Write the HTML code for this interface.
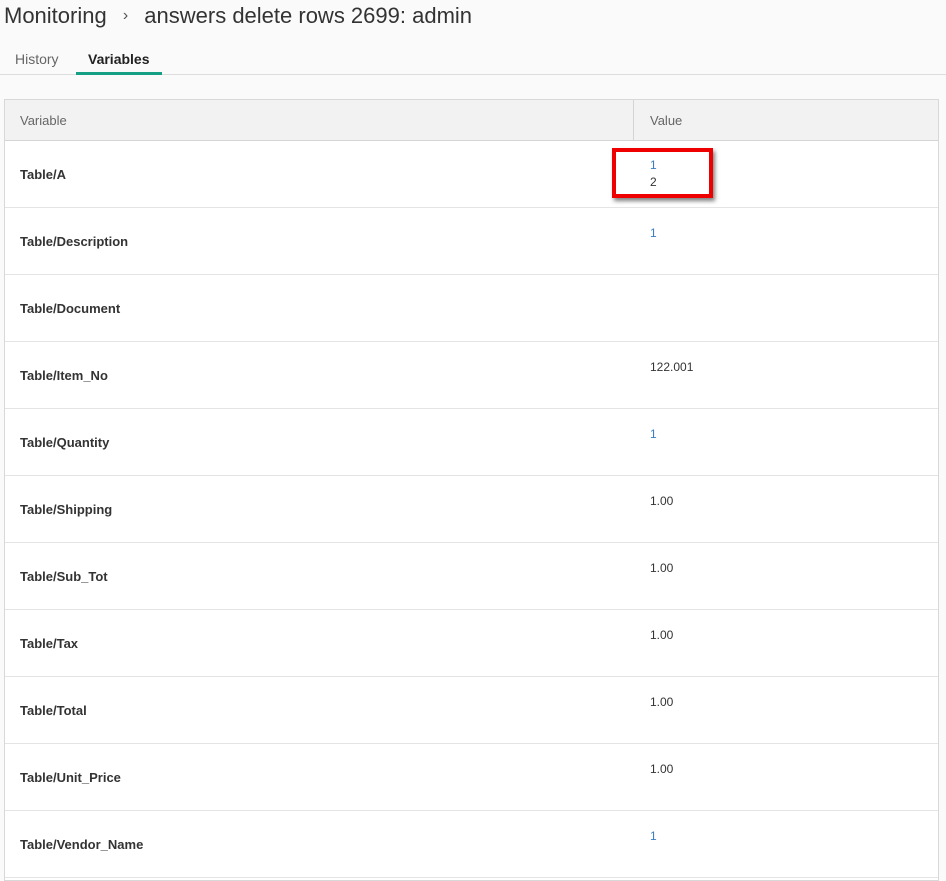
<!DOCTYPE html>
<html><head><style>
body{margin:0;background:#fafafa;font-family:"Liberation Sans",sans-serif;width:946px;height:869px;overflow:hidden;position:relative}
.t{position:absolute;left:4px;top:16px;font-size:22px;color:#333;line-height:1;top:5px}
.tabs{position:absolute;left:0;top:47px;width:946px;height:27px;border-bottom:1px solid #ddd}
.tab{position:absolute;top:4px;font-size:14px}
.tbl{position:absolute;left:4px;top:99px;width:933px;height:780px;border:1px solid #d8d8d8;background:#fff}
.hd{height:40px;background:#f2f2f2;border-bottom:1px solid #d4d4d4;position:relative;font-size:13px;color:#666}
.hd span{position:absolute;top:13px}
.row{height:66px;border-bottom:1px solid #e4e4e4;position:relative}
.lb{position:absolute;left:15px;top:26px;font-size:13px;font-weight:bold;color:#333}
.v{position:absolute;left:645px;top:17px;font-size:12px;color:#333;line-height:17px}
.b{color:#3b7dc4}
</style></head><body>
<div class="t">Monitoring <span style="font-size:16px;color:#555;margin:0 10px;position:relative;top:-3px">&#8250;</span> answers delete rows 2699: admin</div>
<div class="tabs">
<span class="tab" style="left:15px;color:#666">History</span>
<span class="tab" style="left:88px;color:#222;font-weight:bold">Variables</span>
<div style="position:absolute;left:76px;top:25px;width:86px;height:3px;background:#15a085"></div>
</div>
<div class="tbl">
<div class="hd"><span style="left:15px">Variable</span><div style="position:absolute;left:628px;top:0;width:1px;height:40px;background:#d4d4d4"></div><span style="left:645px">Value</span></div>
<div class="row"><div class="lb">Table/A</div><div class="v" style="top:16px"><span class="b">1</span><br>2</div></div>
<div class="row"><div class="lb">Table/Description</div><div class="v b">1</div></div>
<div class="row"><div class="lb">Table/Document</div></div>
<div class="row"><div class="lb">Table/Item_No</div><div class="v">122.001</div></div>
<div class="row"><div class="lb">Table/Quantity</div><div class="v b">1</div></div>
<div class="row"><div class="lb">Table/Shipping</div><div class="v">1.00</div></div>
<div class="row"><div class="lb">Table/Sub_Tot</div><div class="v">1.00</div></div>
<div class="row"><div class="lb">Table/Tax</div><div class="v">1.00</div></div>
<div class="row"><div class="lb">Table/Total</div><div class="v">1.00</div></div>
<div class="row"><div class="lb">Table/Unit_Price</div><div class="v">1.00</div></div>
<div class="row"><div class="lb">Table/Vendor_Name</div><div class="v b">1</div></div>
</div>
<div style="position:absolute;left:612px;top:148px;width:93px;height:42px;border:4px solid #e00;box-shadow:2px 3px 4px rgba(0,0,0,.5)"></div>
</body></html>
